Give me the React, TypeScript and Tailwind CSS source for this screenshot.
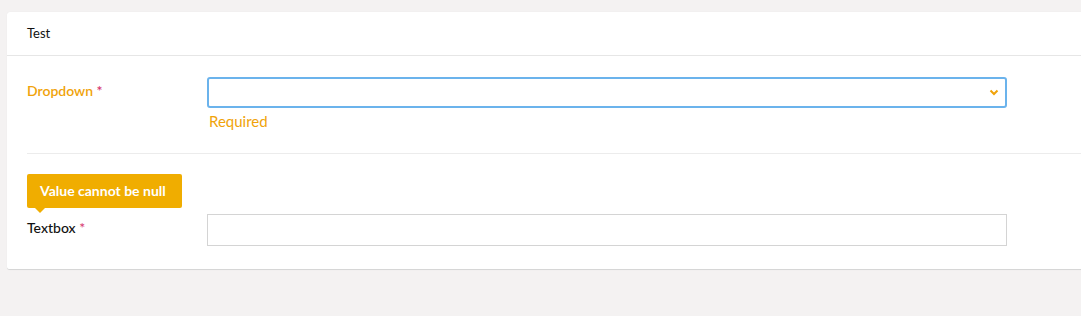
import React from 'react';

export default function App() {
  return (
    <div className="h-[316px] w-[1081px] overflow-hidden bg-[#f4f2f2] pt-[12px] pl-[7px] font-['Lato','Liberation_Sans',sans-serif]">
      <div className="w-[1100px] rounded-[3px] bg-white border-b border-[#d6d6d6] shadow-[0_0_1px_rgba(0,0,0,0.08)]">
        <div className="h-[44px] border-b border-[#e6e6e6] px-[20px] flex items-center">
          <span className="text-[13px] text-[#111]">Test</span>
        </div>

        <div className="pl-[20px]">
          <div className="flex pt-[21px] pb-[23px] border-b border-[#ececec]">
            <div className="w-[180px] pt-[3px] text-[14px] font-semibold text-[#f0a30a]">
              Dropdown <span className="text-[#d6336c]">*</span>
            </div>
            <div className="flex flex-col">
              <div className="w-[800px] h-[31px] rounded-[3px] border-2 border-[#6bb3ec] flex items-center justify-end pr-[6px]">
                <svg width="10" height="7" viewBox="0 0 10 7" fill="none">
                  <path d="M1.5 1.5 L5 5 L8.5 1.5" stroke="#f0a30a" strokeWidth="2" />
                </svg>
              </div>
              <span className="mt-[4px] ml-[2px] text-[15px] text-[#f0a30a] leading-[18px]">Required</span>
            </div>
          </div>

          <div className="pt-[20px] pb-[23px]">
            <div className="relative inline-block rounded-[2px] bg-[#f0ad00] pl-[13px] pr-[16px] h-[34px] leading-[34px] text-[14px] font-bold text-white">
              Value cannot be null
              <span className="absolute left-[7px] -bottom-[5px] w-0 h-0 border-l-[6px] border-r-[6px] border-t-[6px] border-l-transparent border-r-transparent border-t-[#f0ad00]" />
            </div>
            <div className="flex mt-[6px]">
              <div className="w-[180px] pt-[3px] text-[14px] font-medium text-[#111]">
                Textbox <span className="text-[#d6336c]">*</span>
              </div>
              <div className="w-[800px] h-[32px] border border-[#d4d4d4]" />
            </div>
          </div>
        </div>
      </div>
    </div>
  );
}
